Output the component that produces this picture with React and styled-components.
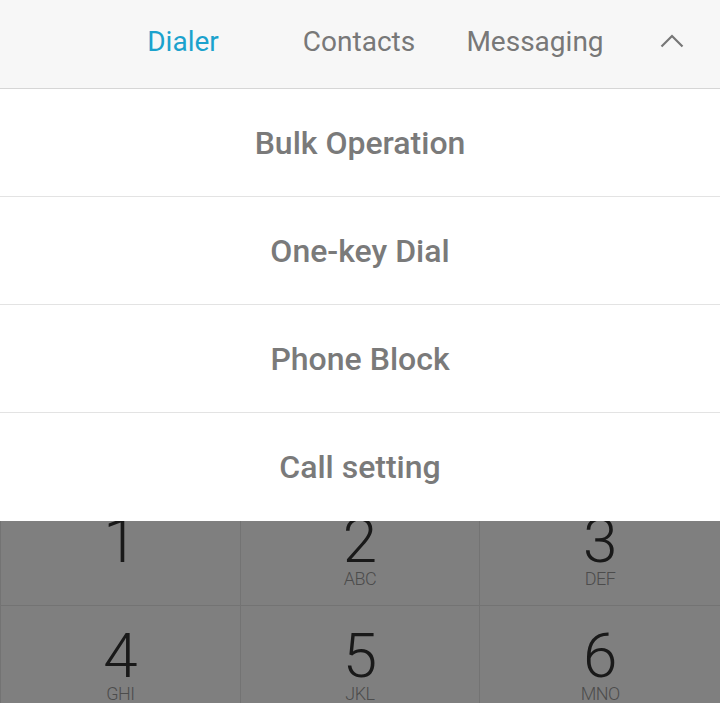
import React from 'react';
import styled, { createGlobalStyle } from 'styled-components';

const GlobalStyle = createGlobalStyle`
  html, body {
    margin: 0;
    padding: 0;
    background: #ffffff;
    font-family: Roboto, "Liberation Sans", sans-serif;
    overflow: hidden;
  }
`;

const Screen = styled.div`
  width: 720px;
  height: 703px;
  display: flex;
  flex-direction: column;
  overflow: hidden;
`;

const Header = styled.header`
  height: 88px;
  flex-shrink: 0;
  display: flex;
  align-items: center;
  padding-left: 95px;
  background: #f7f7f7;
  border-bottom: 1px solid #d6d6d6;
  box-sizing: content-box;
`;

const Tab = styled.div`
  width: 176px;
  text-align: center;
  font-size: 28px;
  line-height: 1;
  margin-top: -5px;
  color: ${({ active }) => (active ? '#1ba2cd' : '#787878')};
`;

const Toggle = styled.div`
  flex: 1;
  display: flex;
  justify-content: center;
  margin-top: -7px;
`;

const Stage = styled.div`
  position: relative;
  flex: 1;
  display: flex;
  flex-direction: column;
  justify-content: flex-end;
  overflow: hidden;
`;

const Keypad = styled.div`
  display: grid;
  grid-template-columns: repeat(3, 1fr);
  margin-bottom: -18px;
  border-left: 1px solid #e6e6e6;
`;

const Key = styled.div`
  height: 115px;
  box-sizing: border-box;
  display: flex;
  flex-direction: column;
  align-items: center;
  padding-top: 23px;
  border-right: 1px solid #e6e6e6;
  border-bottom: 1px solid #e6e6e6;
  &:nth-child(3n) {
    border-right: none;
  }
`;

const Digit = styled.span`
  font-size: 62px;
  font-weight: 300;
  line-height: 54px;
  color: #333333;
`;

const Letters = styled.span`
  font-size: 18px;
  font-weight: 300;
  line-height: 20px;
  margin-top: 1px;
  color: #999999;
  letter-spacing: -0.5px;
`;

const Scrim = styled.div`
  position: absolute;
  inset: 0;
  background: rgba(0, 0, 0, 0.5);
`;

const Menu = styled.ul`
  position: absolute;
  top: 0;
  left: 0;
  right: 0;
  margin: 0;
  padding: 0;
  list-style: none;
  background: #ffffff;
`;

const MenuItem = styled.li`
  height: 107px;
  display: flex;
  align-items: center;
  justify-content: center;
  font-size: 32px;
  font-weight: 500;
  color: #7a7a7a;
  border-bottom: ${({ last }) => (last ? 'none' : '1px solid #e3e3e3')};
  box-sizing: content-box;
  padding-bottom: ${({ last }) => (last ? '1px' : '0')};
`;

const keys = [
  ['1', ''],
  ['2', 'ABC'],
  ['3', 'DEF'],
  ['4', 'GHI'],
  ['5', 'JKL'],
  ['6', 'MNO'],
];

const menuItems = ['Bulk Operation', 'One-key Dial', 'Phone Block', 'Call setting'];

const ChevronUp = () => (
  <svg width="24" height="14" viewBox="0 0 24 14" fill="none">
    <path d="M1.5 12.5 L12 2 L22.5 12.5" stroke="#777777" strokeWidth="2.2" />
  </svg>
);

const App = () => (
  <>
    <GlobalStyle />
    <Screen>
      <Header>
        <Tab active>Dialer</Tab>
        <Tab>Contacts</Tab>
        <Tab>Messaging</Tab>
        <Toggle>
          <ChevronUp />
        </Toggle>
      </Header>
      <Stage>
        <Keypad>
          {keys.map(([digit, letters]) => (
            <Key key={digit}>
              <Digit>{digit}</Digit>
              <Letters>{letters}</Letters>
            </Key>
          ))}
        </Keypad>
        <Scrim />
        <Menu>
          {menuItems.map((item, i) => (
            <MenuItem key={item} last={i === menuItems.length - 1}>
              {item}
            </MenuItem>
          ))}
        </Menu>
      </Stage>
    </Screen>
  </>
);

export default App;
